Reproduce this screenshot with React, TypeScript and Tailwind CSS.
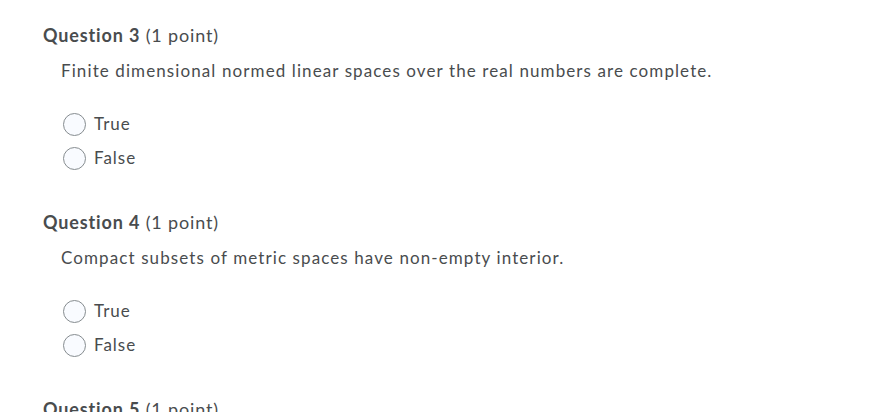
import React from "react";

function Radio({ label }: { label: string }) {
  return (
    <label className="flex items-center h-[34px]">
      <span className="w-[23px] h-[23px] rounded-full border border-[#868c8f] bg-[#f9fbff] shrink-0" />
      <span className="ml-[8px] text-[17px] tracking-[1px] text-[#494c4e]">{label}</span>
    </label>
  );
}

function Question({ n, text }: { n: number; text: string }) {
  return (
    <div className="h-[187px]">
      <div className="pt-[20px] text-[18px] tracking-[0.85px] text-[#494c4e] leading-[30px]">
        <span className="font-bold">Question {n}</span> (1 point)
      </div>
      <div className="pl-[18px] pt-[6px] text-[17px] tracking-[1.1px] text-[#494c4e] leading-[30px]">{text}</div>
      <div className="pl-[20px] pt-[21px]">
        <Radio label="True" />
        <Radio label="False" />
      </div>
    </div>
  );
}

export default function App() {
  return (
    <div className="w-[871px] h-[412px] overflow-hidden bg-white pl-[43px]" style={{ fontFamily: "Lato, sans-serif" }}>
      <Question n={3} text="Finite dimensional normed linear spaces over the real numbers are complete." />
      <Question n={4} text="Compact subsets of metric spaces have non-empty interior." />
      <Question n={5} text="" />
    </div>
  );
}
